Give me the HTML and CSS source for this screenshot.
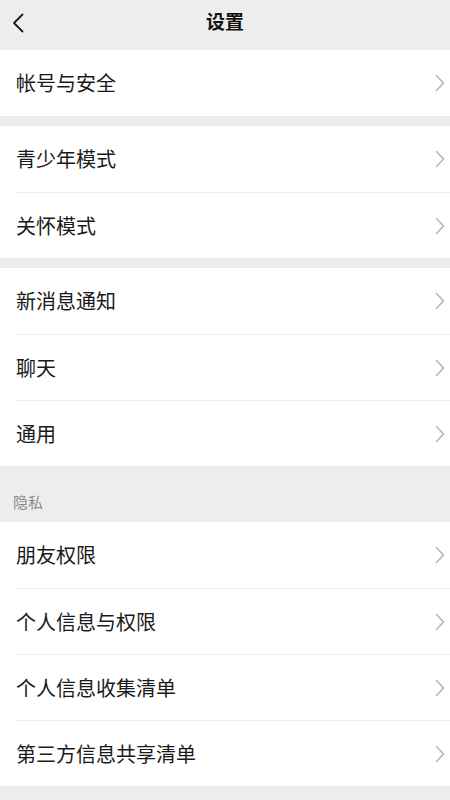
FILE: index.html
```html
<!DOCTYPE html>
<html lang="zh-CN">
<head>
<meta charset="utf-8">
<title>设置</title>
<link rel="stylesheet" href="styles.css">
</head>
<body>
<div class="page">
  <header class="nav">
    <span class="back">
      <svg width="14" height="22" viewBox="0 0 14 22"><path d="M11.5 2.5 L3 11 L11.5 19.5" fill="none" stroke="#1b1b1b" stroke-width="1.8" stroke-linecap="round" stroke-linejoin="round"/></svg>
    </span>
    <h1 class="title">设置</h1>
  </header>

  <section class="group">
    <div class="row"><span class="label">帐号与安全</span><span class="arrow"><svg width="10" height="18" viewBox="0 0 10 18"><path d="M1.5 1.5 L8.5 9 L1.5 16.5" fill="none" stroke="#b4b4b4" stroke-width="1.5" stroke-linecap="round" stroke-linejoin="round"/></svg></span></div>
  </section>

  <div class="gap"></div>

  <section class="group">
    <div class="row"><span class="label">青少年模式</span><span class="arrow"><svg width="10" height="18" viewBox="0 0 10 18"><path d="M1.5 1.5 L8.5 9 L1.5 16.5" fill="none" stroke="#b4b4b4" stroke-width="1.5" stroke-linecap="round" stroke-linejoin="round"/></svg></span></div>
    <div class="row"><span class="label">关怀模式</span><span class="arrow"><svg width="10" height="18" viewBox="0 0 10 18"><path d="M1.5 1.5 L8.5 9 L1.5 16.5" fill="none" stroke="#b4b4b4" stroke-width="1.5" stroke-linecap="round" stroke-linejoin="round"/></svg></span></div>
  </section>

  <div class="gap"></div>

  <section class="group">
    <div class="row"><span class="label">新消息通知</span><span class="arrow"><svg width="10" height="18" viewBox="0 0 10 18"><path d="M1.5 1.5 L8.5 9 L1.5 16.5" fill="none" stroke="#b4b4b4" stroke-width="1.5" stroke-linecap="round" stroke-linejoin="round"/></svg></span></div>
    <div class="row"><span class="label">聊天</span><span class="arrow"><svg width="10" height="18" viewBox="0 0 10 18"><path d="M1.5 1.5 L8.5 9 L1.5 16.5" fill="none" stroke="#b4b4b4" stroke-width="1.5" stroke-linecap="round" stroke-linejoin="round"/></svg></span></div>
    <div class="row"><span class="label">通用</span><span class="arrow"><svg width="10" height="18" viewBox="0 0 10 18"><path d="M1.5 1.5 L8.5 9 L1.5 16.5" fill="none" stroke="#b4b4b4" stroke-width="1.5" stroke-linecap="round" stroke-linejoin="round"/></svg></span></div>
  </section>

  <div class="section-title">隐私</div>

  <section class="group">
    <div class="row"><span class="label">朋友权限</span><span class="arrow"><svg width="10" height="18" viewBox="0 0 10 18"><path d="M1.5 1.5 L8.5 9 L1.5 16.5" fill="none" stroke="#b4b4b4" stroke-width="1.5" stroke-linecap="round" stroke-linejoin="round"/></svg></span></div>
    <div class="row"><span class="label">个人信息与权限</span><span class="arrow"><svg width="10" height="18" viewBox="0 0 10 18"><path d="M1.5 1.5 L8.5 9 L1.5 16.5" fill="none" stroke="#b4b4b4" stroke-width="1.5" stroke-linecap="round" stroke-linejoin="round"/></svg></span></div>
    <div class="row"><span class="label">个人信息收集清单</span><span class="arrow"><svg width="10" height="18" viewBox="0 0 10 18"><path d="M1.5 1.5 L8.5 9 L1.5 16.5" fill="none" stroke="#b4b4b4" stroke-width="1.5" stroke-linecap="round" stroke-linejoin="round"/></svg></span></div>
    <div class="row"><span class="label">第三方信息共享清单</span><span class="arrow"><svg width="10" height="18" viewBox="0 0 10 18"><path d="M1.5 1.5 L8.5 9 L1.5 16.5" fill="none" stroke="#b4b4b4" stroke-width="1.5" stroke-linecap="round" stroke-linejoin="round"/></svg></span></div>
  </section>
</div>
</body>
</html>
```
FILE: styles.css
```css
html, body {
  margin: 0;
  padding: 0;
  background: #ededed;
}
body {
  font-family: "Noto Sans CJK SC", "Noto Sans", sans-serif;
  color: #1a1a1a;
}
.page {
  width: 450px;
  min-height: 800px;
  background: #ededed;
}
.nav {
  height: 50px;
  display: grid;
  grid-template-columns: 60px 1fr 60px;
  align-items: center;
  background: #ededed;
}
.back {
  display: flex;
  align-items: center;
  padding-left: 11px;
  margin-bottom: 4px;
}
.title {
  margin: 0 0 10px 0;
  font-size: 19px;
  font-weight: 700;
  text-align: center;
  line-height: 1;
  color: #111;
}
.group {
  background: #fff;
}
.row {
  height: 66px;
  display: flex;
  align-items: center;
  justify-content: space-between;
  margin-left: 16px;
  padding-right: 5px;
  box-sizing: border-box;
  border-top: 1px solid #ececec;
}
.row:first-child {
  border-top: none;
}
.label {
  font-size: 20px;
  line-height: 1;
  color: #1a1a1a;
}
.arrow {
  display: flex;
  align-items: center;
}
.gap {
  height: 10px;
}
.section-title {
  height: 56px;
  box-sizing: border-box;
  padding: 26px 0 0 13px;
  font-size: 15px;
  line-height: 20px;
  color: #8a8a8a;
}
```
